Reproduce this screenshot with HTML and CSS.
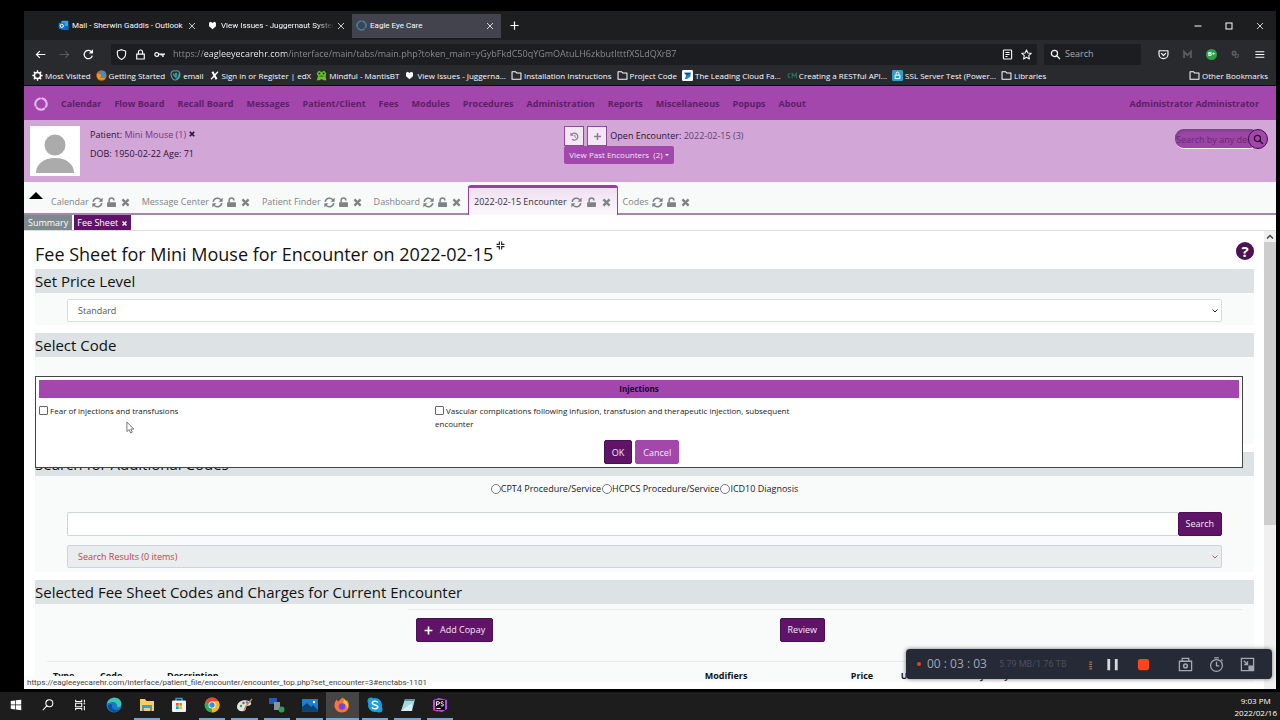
FILE: index.html
```html
<!DOCTYPE html>
<html lang="en">
<head>
    <meta charset="utf-8">
    <title>Eagle Eye Care</title>
    <link rel="stylesheet" href="styles.css">
</head>
<body>
<svg class="sprite" aria-hidden="true">
    <symbol id="times" viewBox="0 0 16 16"><path d="M3.5 3.5l9 9M12.500 3.500l-9 9" fill="none" stroke="currentColor" stroke-width="3.400"/></symbol>
    <symbol id="thin-x" viewBox="0 0 16 16"><path d="M2 2l12 12M14 2L2 14" fill="none" stroke="currentColor" stroke-width="1.600"/></symbol>
    <symbol id="sync" viewBox="0 0 16 16"><path d="M1.800 7A6.300 6.300 0 0 1 13 4.200M14.200 9A6.300 6.300 0 0 1 3 11.800" fill="none" stroke="currentColor" stroke-width="2.200"/><path d="M15.500 0.800v6h-6zM0.500 15.200v-6h6z" fill="currentColor"/></symbol>
    <symbol id="unlock" viewBox="0 0 16 16"><path d="M4.500 8V5a3.500 3.500 0 0 1 7 0" fill="none" stroke="currentColor" stroke-width="2.200"/><rect x="1.500" y="7.500" width="13" height="7" rx="1" fill="currentColor"/></symbol>
    <symbol id="folder" viewBox="0 0 16 16"><path d="M1.500 13.500v-11h5l2 2h6v9z" fill="none" stroke="currentColor" stroke-width="1.500" stroke-linejoin="round"/></symbol>
    <symbol id="mantis" viewBox="0 0 16 16"><path d="M8 13.500L3 9V4l2.500-1.500L8 4.500l2.500-2L13 4v5z" fill="#fff"/></symbol>
    <symbol id="lens" viewBox="0 0 16 16"><circle cx="6.500" cy="6.500" r="4.500" fill="none" stroke="currentColor" stroke-width="1.800"/><path d="M10 10l4.500 4.500" stroke="currentColor" stroke-width="2"/></symbol>
    <symbol id="ring" viewBox="0 0 16 16"><circle cx="8" cy="8" r="6.300" fill="none" stroke="currentColor" stroke-width="1.200"/><path d="M9 1.500A6.500 6.500 0 0 1 13.400 11.500M12.200 13A6.500 6.500 0 0 1 2.500 11.500M1.900 10.300A6.500 6.500 0 0 1 7.400 1.500" fill="none" stroke="currentColor" stroke-width="2.400"/></symbol>
    <symbol id="chevron" viewBox="0 0 16 16"><path d="M3 5l5 5 5-5" fill="none" stroke="currentColor" stroke-width="2"/></symbol>
</svg>

<div class="browser">
    <div class="tabbar">
        <div class="browser-tab">
            <svg class="favicon" viewBox="0 0 16 16"><rect x="5" y="1" width="10" height="13" rx="1" fill="#28a8ea"/><path d="M5 8l10 1v5H5z" fill="#1066b5"/><rect x="1" y="4" width="9" height="9" rx="1" fill="#0f78d4"/><circle cx="5.500" cy="8.500" r="2.300" fill="none" stroke="#fff" stroke-width="1.400"/></svg>
            <span class="tab-title">Mail - Sherwin Gaddis - Outlook</span>
            <button class="icon-btn" aria-label="Close tab"><svg class="mini"><use href="#thin-x"/></svg></button>
        </div>
        <div class="browser-tab">
            <svg class="favicon"><use href="#mantis"/></svg>
            <span class="tab-title fade">View Issues - Juggernaut System</span>
            <button class="icon-btn" aria-label="Close tab"><svg class="mini"><use href="#thin-x"/></svg></button>
        </div>
        <div class="browser-tab current">
            <svg class="favicon blue"><use href="#ring"/></svg>
            <span class="tab-title">Eagle Eye Care</span>
            <button class="icon-btn" aria-label="Close tab"><svg class="mini"><use href="#thin-x"/></svg></button>
        </div>
        <button class="icon-btn new-tab" aria-label="New tab"><svg class="ico" viewBox="0 0 16 16"><path d="M8 2v12M2 8h12" stroke="#fff" stroke-width="1.800"/></svg></button>
        <div class="window-buttons">
            <button class="icon-btn" aria-label="Minimize"><svg class="mini" viewBox="0 0 16 16"><path d="M1 8h14" stroke="#fff" stroke-width="2"/></svg></button>
            <button class="icon-btn" aria-label="Maximize"><svg class="mini" viewBox="0 0 16 16"><rect x="2" y="2" width="12" height="12" fill="none" stroke="#fff" stroke-width="2"/></svg></button>
            <button class="icon-btn" aria-label="Close"><svg class="mini"><use href="#thin-x"/></svg></button>
        </div>
    </div>

    <div class="navbar">
        <div class="nav-buttons">
            <button class="icon-btn" aria-label="Back"><svg class="ico" viewBox="0 0 16 16"><path d="M15 8H2M7 3L2 8l5 5" fill="none" stroke="#fff" stroke-width="1.600"/></svg></button>
            <button class="icon-btn dim" aria-label="Forward"><svg class="ico" viewBox="0 0 16 16"><path d="M1 8h13M9 3l5 5-5 5" fill="none" stroke="currentColor" stroke-width="1.600"/></svg></button>
            <button class="icon-btn" aria-label="Reload"><svg class="ico" viewBox="0 0 16 16"><path d="M13.500 9.500A6 6 0 1 1 12 4" fill="none" stroke="#fff" stroke-width="1.800"/><path d="M14.500 0.500v6h-6z" fill="#fff"/></svg></button>
        </div>
        <div class="urlbar">
            <svg class="ico" viewBox="0 0 16 16"><path d="M8 1l6 2v4c0 4-3 7-6 8.300C5 14 2 11 2 7V3z" fill="none" stroke="currentColor" stroke-width="1.600"/></svg>
            <svg class="ico" viewBox="0 0 16 16"><path d="M5 7V4.500a3 3 0 0 1 6 0V7M2.500 7.500h11v7h-11z" fill="none" stroke="currentColor" stroke-width="1.700"/></svg>
            <svg class="ico" viewBox="0 0 16 16"><circle cx="4" cy="8" r="2.800" fill="none" stroke="currentColor" stroke-width="1.700"/><path d="M7 7.500h9M13 7.500v4M10.500 7.500v2" fill="none" stroke="currentColor" stroke-width="2"/></svg>
            <input class="url" aria-label="Address" value="https://eagleeyecarehr.com/interface/main/tabs/main.php?token_main=yGybFkdC50qYGmOAtuLH6zkbutItttfXSLdQXrB7">
            <svg class="ico" viewBox="0 0 16 16"><rect x="2" y="1.500" width="12" height="13" rx="1" fill="none" stroke="currentColor" stroke-width="1.600"/><path d="M5 5h6M5 8h6M5 11h3" stroke="currentColor" stroke-width="1.500"/></svg>
            <svg class="ico" viewBox="0 0 16 16"><path d="M8 1.300l2 4.500 4.900.5-3.700 3.300 1.100 4.900L8 12l-4.300 2.500 1.100-4.900L1.100 6.300l4.900-.5z" fill="none" stroke="currentColor" stroke-width="1.500" stroke-linejoin="round"/></svg>
        </div>
        <div class="searchbar">
            <svg class="ico"><use href="#lens"/></svg>
            <input class="search-web" aria-label="Search the web" placeholder="Search">
        </div>
        <div class="extensions">
            <button class="icon-btn" aria-label="Pocket"><svg class="ico" viewBox="0 0 16 16"><path d="M1.500 2.500h13V8a6.500 6 0 0 1-13 0zM4.500 6L8 9.500 11.500 6" fill="none" stroke="currentColor" stroke-width="1.700" stroke-linejoin="round"/></svg></button>
            <button class="icon-btn dim" aria-label="Extension"><svg class="ico" viewBox="0 0 16 16"><path d="M3 13V4l5 5 5-5v9" fill="none" stroke="currentColor" stroke-width="2.600"/></svg></button>
            <button class="icon-btn" aria-label="Extension B+"><span class="badge-b">B+</span></button>
            <button class="icon-btn dim" aria-label="Extension"><svg class="ico" viewBox="0 0 16 16"><circle cx="6" cy="6" r="2.500" fill="none" stroke="currentColor" stroke-width="2.400"/><path d="M7 8h5v3a3 3 0 0 1-4 1z" fill="none" stroke="currentColor" stroke-width="1.600"/></svg></button>
            <button class="icon-btn" aria-label="Menu"><svg class="ico" viewBox="0 0 16 16"><path d="M2 4h13M2 8h13M2 12h13" stroke="currentColor" stroke-width="1.800"/></svg></button>
        </div>
    </div>

    <div class="bookmarks">
        <a href="#"><svg class="ico" viewBox="0 0 16 16"><circle cx="8" cy="8" r="4.500" fill="none" stroke="#fff" stroke-width="2.200"/><path d="M8 0.500v3M8 12.500v3M0.500 8h3M12.500 8h3M2.700 2.700l2 2M11.300 11.300l2 2M13.300 2.700l-2 2M4.700 11.300l-2 2" stroke="#fff" stroke-width="2"/></svg>Most Visited</a>
        <a href="#"><svg class="ico" viewBox="0 0 16 16"><circle cx="8" cy="8" r="7.500" fill="#e66000"/><circle cx="9" cy="6.500" r="5" fill="#3b8fd0"/><path d="M1 5c2 1 3 0 5 1s2 3 0 4 5 3 8 0c-2 5-9 6-12 1z" fill="#ff9500"/></svg>Getting Started</a>
        <a href="#"><svg class="ico" viewBox="0 0 16 16"><path d="M8 1.500C4 0 1 3 1.500 7S5 15 8 14.500 14.500 11 14.500 7 12 0 8 1.500zM5 5c0 5 5 6 5 2s-4-2-2 3 6-1 5-5" fill="none" stroke="#3fa7ab" stroke-width="1.600"/></svg>email</a>
        <a href="#"><svg class="ico" viewBox="0 0 16 16"><path d="M5 2.500l6 11" stroke="#fff" stroke-width="3"/><path d="M13 2.500L3 13.500" stroke="#fff" stroke-width="1.800"/></svg>Sign in or Register | edX</a>
        <a href="#"><svg class="ico" viewBox="0 0 16 16"><path d="M1 5l3-4 4 2 4-2 3 4-1 4 1 6h-4l-3-2-3 2H1l2-6z" fill="#6cc02b"/><circle cx="5" cy="5" r="1.400" fill="#143008"/><circle cx="11" cy="5" r="1.400" fill="#143008"/><path d="M5 9h6" stroke="#143008"/></svg>Mindful - MantisBT</a>
        <a href="#"><svg class="ico"><use href="#mantis"/></svg>View Issues - Juggerna...</a>
        <a href="#"><svg class="ico"><use href="#folder"/></svg>Installation Instructions</a>
        <a href="#"><svg class="ico"><use href="#folder"/></svg>Project Code</a>
        <a href="#"><svg class="ico" viewBox="0 0 16 16"><rect width="16" height="16" rx="2" fill="#fff"/><path d="M3 4h10l-1 6-5 3H4l2-5z" fill="#2485d8"/><path d="M3 4h10l-5 4z" fill="#174a86"/></svg>The Leading Cloud Fa...</a>
        <a href="#"><svg class="ico" viewBox="0 0 16 16"><path d="M6 5a3 3 0 1 0 0 6M9 12V5l3 4 3-4v7" fill="none" stroke="#2f7058" stroke-width="1.600"/></svg>Creating a RESTful API...</a>
        <a href="#"><svg class="ico" viewBox="0 0 16 16"><rect width="16" height="16" rx="2" fill="#2d9fc9"/><path d="M6 7V5a2 2 0 0 1 4 0v2M4.500 7.500h7v5h-7z" fill="none" stroke="#fff" stroke-width="1.400"/></svg>SSL Server Test (Power...</a>
        <a href="#"><svg class="ico"><use href="#folder"/></svg>Libraries</a>
        <a href="#" class="last"><svg class="ico"><use href="#folder"/></svg>Other Bookmarks</a>
    </div>

    <div class="app">
        <nav class="menu">
            <svg class="logo"><use href="#ring"/></svg>
            <a href="#">Calendar</a>
            <a href="#">Flow Board</a>
            <a href="#">Recall Board</a>
            <a href="#">Messages</a>
            <a href="#">Patient/Client</a>
            <a href="#">Fees</a>
            <a href="#">Modules</a>
            <a href="#">Procedures</a>
            <a href="#">Administration</a>
            <a href="#">Reports</a>
            <a href="#">Miscellaneous</a>
            <a href="#">Popups</a>
            <a href="#">About</a>
            <a href="#" class="user">Administrator Administrator</a>
        </nav>

        <div class="patient">
            <div class="patient-info">
                <svg class="avatar" viewBox="0 0 50 50"><rect width="50" height="50" fill="#fff"/><circle cx="25" cy="19" r="10.500" fill="#ababab"/><path d="M6 47c0-9 8-15 19-15s19 6 19 15z" fill="#ababab"/></svg>
                <div class="patient-text">
                    <div>Patient: <a href="#">Mini Mouse (1)</a> <button class="icon-btn dark" aria-label="Clear patient"><svg class="mini"><use href="#times"/></svg></button></div>
                    <div>DOB: 1950-02-22 Age: 71</div>
                </div>
            </div>
            <div class="encounter">
                <div class="encounter-row">
                    <button class="square" aria-label="History"><svg class="ico" viewBox="0 0 16 16"><path d="M4 5A5 5 0 1 1 4.500 12" fill="none" stroke="currentColor" stroke-width="1.800"/><path d="M2 2v5h5z" fill="currentColor"/><path d="M8.500 5.500v3l2 1.500" fill="none" stroke="currentColor" stroke-width="1.400"/></svg></button>
                    <button class="square" aria-label="New encounter"><svg class="ico" viewBox="0 0 16 16"><path d="M8 3v10M3 8h10" stroke="currentColor" stroke-width="2.200"/></svg></button>
                    <span>Open Encounter: <a href="#">2022-02-15 (3)</a></span>
                </div>
                <button class="past">View Past Encounters&nbsp; (2)<i class="caret"></i></button>
            </div>
            <div class="finder">
                <input class="finder-input" aria-label="Search patients" placeholder="Search by any demographics">
                <button class="finder-btn" aria-label="Search"><svg class="ico"><use href="#lens"/></svg></button>
            </div>
        </div>

        <div class="frames">
            <button class="collapse" aria-label="Collapse"></button>
            <div class="frame-tab"><span>Calendar</span><svg class="ico"><use href="#sync"/></svg><svg class="ico"><use href="#unlock"/></svg><svg class="ico"><use href="#times"/></svg></div>
            <div class="frame-tab"><span>Message Center</span><svg class="ico"><use href="#sync"/></svg><svg class="ico"><use href="#unlock"/></svg><svg class="ico"><use href="#times"/></svg></div>
            <div class="frame-tab"><span>Patient Finder</span><svg class="ico"><use href="#sync"/></svg><svg class="ico"><use href="#unlock"/></svg><svg class="ico"><use href="#times"/></svg></div>
            <div class="frame-tab"><span>Dashboard</span><svg class="ico"><use href="#sync"/></svg><svg class="ico"><use href="#unlock"/></svg><svg class="ico"><use href="#times"/></svg></div>
            <div class="frame-tab active"><span>2022-02-15 Encounter</span><svg class="ico"><use href="#sync"/></svg><svg class="ico"><use href="#unlock"/></svg><svg class="ico"><use href="#times"/></svg></div>
            <div class="frame-tab"><span>Codes</span><svg class="ico"><use href="#sync"/></svg><svg class="ico"><use href="#unlock"/></svg><svg class="ico"><use href="#times"/></svg></div>
        </div>

        <div class="subtabs">
            <a href="#" class="subtab">Summary</a>
            <a href="#" class="subtab active">Fee Sheet <svg class="tiny"><use href="#times"/></svg></a>
        </div>

        <div class="content">
            <main class="sheet">
                <div class="sheet-head">
                    <h1>Fee Sheet for Mini Mouse for Encounter on 2022-02-15</h1>
                    <svg class="compress" viewBox="0 0 16 16"><path d="M6 1v5H1M10 1v5h5M6 15v-5H1M10 15v-5h5" fill="none" stroke="#222" stroke-width="2"/></svg>
                    <a href="#" class="help" aria-label="Help">?</a>
                </div>

                <section class="block">
                    <h2>Set Price Level</h2>
                    <div class="block-body">
                        <div class="select-wrap">
                            <select aria-label="Price level"><option>Standard</option></select>
                            <svg class="mini"><use href="#chevron"/></svg>
                        </div>
                    </div>
                </section>

                <section class="block select-code">
                    <h2>Select Code</h2>
                    <form class="popup">
                        <div class="popup-title">Injections</div>
                        <div class="popup-options">
                            <label><input type="checkbox"> Fear of injections and transfusions</label>
                            <label><input type="checkbox"> Vascular complications following infusion, transfusion and therapeutic injection, subsequent encounter</label>
                        </div>
                        <div class="popup-buttons">
                            <button type="button" class="btn">OK</button>
                            <button type="button" class="btn light">Cancel</button>
                        </div>
                    </form>
                </section>

                <section class="block">
                    <h2>Search for Additional Codes</h2>
                    <div class="block-body search-body">
                        <div class="radios">
                            <label><input type="radio" name="code">CPT4 Procedure/Service</label>
                            <label><input type="radio" name="code">HCPCS Procedure/Service</label>
                            <label><input type="radio" name="code">ICD10 Diagnosis</label>
                        </div>
                        <div class="search-group">
                            <input class="search-text" type="text" aria-label="Search term">
                            <button class="btn">Search</button>
                        </div>
                        <div class="select-wrap results">
                            <select aria-label="Search results"><option>Search Results (0 items)</option></select>
                            <svg class="mini"><use href="#chevron"/></svg>
                        </div>
                    </div>
                </section>

                <section class="block charges">
                    <h2>Selected Fee Sheet Codes and Charges for Current Encounter</h2>
                    <div class="actions">
                        <div><button class="btn"><svg class="ico" viewBox="0 0 16 16"><path d="M8 1v14M1 8h14" stroke="#fff" stroke-width="3"/></svg>Add Copay</button></div>
                        <div><button class="btn">Review</button></div>
                    </div>
                    <table>
                        <thead>
                        <tr>
                            <th class="c-type">Type</th>
                            <th class="c-code">Code</th>
                            <th class="c-desc">Description</th>
                            <th class="c-mod">Modifiers</th>
                            <th class="c-price">Price</th>
                            <th class="c-units">Units</th>
                            <th>Justify</th>
                        </tr>
                        </thead>
                    </table>
                </section>
            </main>
            <div class="scrollbar">
                <svg class="mini" viewBox="0 0 16 16"><path d="M2 11l6-6 6 6" fill="none" stroke="#444" stroke-width="3"/></svg>
                <div class="thumb"></div>
            </div>
            <div class="status">https://eagleeyecarehr.com/interface/patient_file/encounter/encounter_top.php?set_encounter=3#enctabs-1101</div>
        </div>
    </div>
</div>

<div class="taskbar">
    <div class="system">
        <button class="task" aria-label="Start"><svg viewBox="0 0 16 16"><path d="M2 3.500l5-.7v4.700H2zM7.800 2.700L14 2v5.500H7.800zM2 8.300h5V13l-5-.7zM7.800 8.300H14V14l-6.200-.8z" fill="#fff"/></svg></button>
        <button class="task" aria-label="Search"><svg viewBox="0 0 16 16"><circle cx="9.500" cy="6" r="4" fill="none" stroke="#fff" stroke-width="1.200"/><path d="M6.600 9L2 14" stroke="#fff" stroke-width="1.200"/></svg></button>
        <button class="task" aria-label="Task view"><svg viewBox="0 0 16 16"><path d="M3 2v2h7V2M3 14v-2h7v2M3 6h7v4H3zM13 2v3M13 9v5M12 6.500h2" fill="none" stroke="#fff" stroke-width="1.200"/></svg></button>
    </div>
    <div class="apps">
        <button class="task" aria-label="Edge"><svg viewBox="0 0 16 16"><circle cx="8" cy="8" r="7.500" fill="#1679c9"/><path d="M.700 7C2 1 10-1.500 14 3c3 4 1 8-3 7 1-2-1-5-4-5-3 0-5 1-6.300 2z" fill="#3fc8b0"/><path d="M6 8c-1 3 2 6 7.500 4.500C10 17 2 15 2 9c1-2 3-3 4-1z" fill="#0c4f9a"/></svg></button>
        <button class="task open" aria-label="File Explorer"><svg viewBox="0 0 16 16"><path d="M1 2h5l1.500 2H15v10H1z" fill="#f8cf5a"/><path d="M3 8h10v6h-2v-3H5v3H3z" fill="#3d9bd8"/></svg></button>
        <button class="task" aria-label="Store"><svg viewBox="0 0 16 16"><path d="M5 4V1.500h6V4" fill="none" stroke="#2b9be0" stroke-width="1.400"/><rect x="1" y="3.500" width="14" height="11.500" rx="1" fill="#f2f2f2"/><path d="M5 6h2.700v2.700H5z" fill="#f25022"/><path d="M8.300 6H11v2.700H8.300z" fill="#7fba00"/><path d="M5 9.300h2.700V12H5z" fill="#00a4ef"/><path d="M8.300 9.300H11V12H8.300z" fill="#ffb900"/></svg></button>
        <button class="task open" aria-label="Chrome"><svg viewBox="0 0 16 16"><circle cx="8" cy="8" r="7.500" fill="#34a853"/><path d="M1.500 4.200A7.500 7.500 0 0 1 14.500 4.300L8 8z" fill="#ea4335"/><path d="M14.500 4.200A7.500 7.500 0 0 1 8 15.500L8 8l-1-3.800z" fill="#fbbc05"/><circle cx="8" cy="8" r="3.500" fill="#fff"/><circle cx="8" cy="8" r="2.700" fill="#4285f4"/></svg></button>
        <button class="task open" aria-label="Paint"><svg viewBox="0 0 16 16"><path d="M0 10c0-5 6-8 12-6 4 2 2 5-2 5-2 0 0 4-3 5-4 1-7-1-7-4z" fill="#dfe4e6"/><circle cx="4" cy="9" r="1.200" fill="#3fa54b"/><circle cx="6.500" cy="6" r="1.200" fill="#d83b2b"/><circle cx="10" cy="5.500" r="1.200" fill="#2b7fd8"/><path d="M15 2L9 9l-2 5" stroke="#c48a4a" stroke-width="1.400" fill="none"/></svg></button>
        <button class="task open" aria-label="Remote session"><svg viewBox="0 0 16 16"><rect x="0" y="1" width="8" height="6" fill="#2459c4"/><rect x="5" y="5" width="6" height="8" fill="#8b949c"/><circle cx="12.500" cy="12.500" r="3" fill="#2ea04a"/></svg></button>
        <button class="task open" aria-label="Photos"><svg viewBox="0 0 16 16"><rect x="0" y="2" width="16" height="12.500" fill="#1d7fd1"/><path d="M0 14.500V10l5-4 4 4 2-2 5 5v1.500z" fill="#0b4372"/><circle cx="12" cy="5" r="1.200" fill="#fff"/></svg></button>
        <button class="task open focused" aria-label="Firefox"><svg viewBox="0 0 16 16"><path d="M8 15.500C3.500 15.500.500 12 .500 8.500c0-3 1-5 2.500-6 0 1 .5 1.500 1.500 2C5.500 3 7 2.500 8 .5c3 1 3 3 4 3.500l1-1c3 3 3 12.500-5 12.500z" fill="#ff7139"/><path d="M10 2c4 3 5 7 3 10 0-4-2-6-4-6z" fill="#ffcb32"/><circle cx="8" cy="9.500" r="3.200" fill="#7542e5"/></svg></button>
        <button class="task open" aria-label="Skype"><svg viewBox="0 0 16 16"><circle cx="8" cy="8" r="7" fill="#1b9de2"/><circle cx="4" cy="4" r="3.500" fill="#1b9de2"/><circle cx="12" cy="12" r="3.500" fill="#1b9de2"/><path d="M10.800 5.500C10 3.800 5.300 3.800 5.300 6c0 2.500 5.500 1.500 5.500 4 0 2.300-5 2.300-5.800.3" fill="none" stroke="#fff" stroke-width="1.600"/></svg></button>
        <button class="task open" aria-label="Notepad"><svg viewBox="0 0 16 16"><path d="M5 2h10l-3 12H1z" fill="#a9d7df"/><path d="M5 2h10l-.5 2h-10z" fill="#5f8f99"/><path d="M1 14l11-8 0 8z" fill="#d6eff2"/></svg></button>
        <button class="task open" aria-label="PhpStorm"><svg viewBox="0 0 16 16"><path d="M1 3l6-2 8 2v9l-5 3-9-2z" fill="#b74af7"/><path d="M1 8l5 7-5-2z" fill="#ff318c"/><rect x="3" y="3" width="10" height="10" fill="#111"/><path d="M4.500 9V4.700h1.700a1.200 1.200 0 0 1 0 2.500H4.500M11.500 5.300C10.500 4.200 9 4.600 9 5.700c0 1.300 2.500.9 2.500 2.200s-2 1.300-2.700.3M4.500 11.500h4" fill="none" stroke="#fff" stroke-width="1"/></svg></button>
    </div>
    <div class="clock"><span>9:03 PM</span><span>2022/02/16</span></div>
</div>

<div class="recorder">
    <i class="dot"></i>
    <span class="time">00 : 03 : 03</span>
    <span class="size">5.79 MB/1.76 TB</span>
    <svg class="levels" viewBox="0 0 16 16"><path d="M4 2h5M4 6h5M4 10h5M4 14h5" stroke="#c8682c" stroke-width="1.800"/></svg>
    <button class="icon-btn" aria-label="Pause"><svg class="rec" viewBox="0 0 16 16"><path d="M4 2v12M12 2v12" stroke="#d6d9e0" stroke-width="3"/></svg></button>
    <button class="icon-btn" aria-label="Stop"><svg class="rec" viewBox="0 0 16 16"><rect x="2" y="2" width="12" height="12" rx="2.500" fill="#f9461c"/></svg></button>
    <div class="rec-tools">
        <button class="icon-btn" aria-label="Screenshot"><svg class="rec" viewBox="0 0 16 16"><path d="M1.500 4.500h13v10h-13zM4.500 4V1.500h7V4" fill="none" stroke="currentColor" stroke-width="1.400"/><circle cx="8" cy="9.500" r="2" fill="none" stroke="currentColor" stroke-width="1.600"/></svg></button>
        <button class="icon-btn" aria-label="Timer"><svg class="rec" viewBox="0 0 16 16"><circle cx="8" cy="9" r="6.300" fill="none" stroke="currentColor" stroke-width="1.300"/><path d="M5.500 1h5M8 5v4.500h3M13 2.500l1.500 1.500" fill="none" stroke="currentColor" stroke-width="1.400"/></svg></button>
        <button class="icon-btn" aria-label="Minimize recorder"><svg class="rec" viewBox="0 0 16 16"><path d="M1.500 1.500h13v13h-13zM4 4l4 4M8 4.500V8H4.500" fill="none" stroke="currentColor" stroke-width="1.400"/><rect x="9" y="9" width="5.500" height="5.500" fill="currentColor"/></svg></button>
    </div>
</div>

<svg class="pointer" viewBox="0 0 10 14"><path d="M1 1v10.500l2.500-2.200L5.200 13l1.800-.8L5.300 8.700h3.400z" fill="#fff" stroke="#444" stroke-width=".8"/></svg>
</body>
</html>
```
FILE: styles.css
```css
* {
    box-sizing: border-box;
}

body {
    margin: 0;
    height: 100vh;
    display: flex;
    flex-direction: column;
    padding-top: 11px;
    background: #000;
    font-family: "Open Sans", "Noto Sans", sans-serif;
    font-size: 9px;
    line-height: 12px;
    color: #222;
    overflow: hidden;
}

a {
    color: inherit;
    text-decoration: none;
}

button, input, select {
    font: inherit;
    color: inherit;
    margin: 0;
}

svg {
    display: block;
    flex: none;
}

.sprite {
    position: absolute;
    width: 0;
    height: 0;
}

.ico {
    width: 11px;
    height: 11px;
}

.mini {
    width: 8px;
    height: 8px;
}

.tiny {
    width: 7px;
    height: 7px;
    display: inline-block;
    vertical-align: -1px;
}

.icon-btn {
    display: inline-flex;
    align-items: center;
    justify-content: center;
    padding: 0;
    border: 0;
    background: none;
}

.dim {
    color: #5a5b61;
}

/* browser chrome */

.browser {
    flex: 1;
    min-height: 0;
    display: flex;
    flex-direction: column;
    margin: 0 4px 3px 24px;
    background: #2b2a33;
    color: #fbfbfe;
}

.tabbar {
    display: flex;
    align-items: center;
    height: 29px;
    padding-left: 30px;
    background: #1c1e20;
    font-family: Roboto, sans-serif;
    font-size: 8px;
}

.browser-tab {
    display: flex;
    align-items: center;
    gap: 3px;
    width: 149px;
    height: 24px;
    padding: 0 7px 0 4px;
}

.browser-tab.current {
    background: #42434c;
}

.favicon {
    width: 11px;
    height: 11px;
}

.blue {
    color: #3e7ea6;
}

.tab-title {
    flex: 1;
    overflow: hidden;
    white-space: nowrap;
}

.fade {
    -webkit-mask-image: linear-gradient(to right, #000 85%, transparent);
    mask-image: linear-gradient(to right, #000 85%, transparent);
}

.new-tab {
    margin-left: 8px;
}

.window-buttons {
    display: flex;
    gap: 23px;
    margin-left: auto;
    padding-right: 12px;
}

.navbar {
    display: flex;
    align-items: center;
    height: 25px;
    padding-top: 3px;
    background: #282a2e;
}

.nav-buttons {
    display: flex;
    gap: 13px;
    padding: 0 17px 0 11px;
}

.urlbar, .searchbar {
    display: flex;
    align-items: center;
    height: 21px;
    background: #1b1d20;
    border-radius: 2px;
}

.urlbar {
    flex: 1;
    gap: 8px;
    padding: 0 5px;
    margin-right: 7px;
}

.url {
    flex: 1;
    border: 0;
    padding: 0;
    outline: none;
    color: transparent;
    background: linear-gradient(to right, #8f9095 31px, #fbfbfe 31px, #fbfbfe 114px, #8f9095 114px);
    -webkit-background-clip: text;
    background-clip: text;
}

.searchbar {
    gap: 4px;
    width: 97px;
    padding-left: 6px;
}

.search-web {
    width: 70px;
    border: 0;
    padding: 0;
    background: none;
}

.search-web::placeholder {
    color: #a9aaae;
    opacity: 1;
}

.extensions {
    display: flex;
    gap: 13px;
    padding: 0 11px 0 17px;
}

.badge-b {
    width: 11px;
    height: 11px;
    border-radius: 50%;
    background: #2ea043;
    font-size: 6px;
    font-weight: bold;
    line-height: 11px;
    color: #fff;
}

.bookmarks {
    display: flex;
    align-items: center;
    gap: 5px;
    height: 21px;
    padding: 1px 8px 0;
    background: #282a2e;
    border-bottom: 1px solid #0c0c0d;
    font-size: 8px;
    white-space: nowrap;
}

.bookmarks a {
    display: flex;
    align-items: center;
    gap: 2px;
}

.bookmarks .last {
    margin-left: auto;
}

/* application */

.app {
    flex: 1;
    min-height: 0;
    display: flex;
    flex-direction: column;
    background: #fff;
    color: #222;
}

.menu {
    display: flex;
    align-items: center;
    gap: 13px;
    height: 34px;
    padding: 1px 17px 0 10px;
    background: #a347ad;
    color: #5c2066;
    font-weight: bold;
}

.logo {
    width: 14px;
    height: 14px;
    color: #e6b5ec;
}

.menu .user {
    margin-left: auto;
}

.patient {
    display: flex;
    height: 62px;
    padding: 6px 8px 0 6px;
    background: #d2a6d7;
    color: #2d1233;
}

.patient-info {
    display: flex;
    flex: 0 0 43%;
    gap: 10px;
}

.avatar {
    width: 50px;
    height: 50px;
}

.patient-text {
    display: flex;
    flex-direction: column;
    gap: 7px;
    padding-top: 3px;
}

.patient-text a {
    color: #7a3186;
}

.dark {
    color: #2d1233;
}

.encounter {
    flex: 1;
    padding-left: 2px;
}

.encounter-row {
    display: flex;
    align-items: center;
    gap: 3px;
}

.encounter-row a {
    color: #65406c;
}

.square {
    display: flex;
    align-items: center;
    justify-content: center;
    width: 20px;
    height: 20px;
    padding: 0;
    border: 1px solid #8f4b99;
    background: #f3e6f5;
    color: #8a7d8d;
}

.past {
    display: flex;
    align-items: center;
    gap: 2px;
    height: 18px;
    padding: 0 5px;
    border: 0;
    border-radius: 2px;
    background: #a347ad;
    color: #f3e2f5;
    font-size: 8px;
}

.caret {
    border: 2px solid transparent;
    border-top-color: #fff;
    border-bottom: 0;
}

.finder {
    display: flex;
    align-items: flex-start;
    padding-top: 3px;
}

.finder-input {
    width: 84px;
    height: 20px;
    padding: 3px 0 1px 1px;
    border: 0;
    border-bottom: 1px solid #fff;
    border-radius: 9px;
    background: #9c45a6;
    box-shadow: inset 1px 2px 2px #7a4482;
}

.finder-input::placeholder {
    color: #642a6d;
    opacity: 1;
}

.finder-btn {
    display: flex;
    align-items: center;
    justify-content: center;
    width: 20px;
    height: 20px;
    margin-left: -11px;
    padding: 0;
    border: 1px solid #3d1145;
    border-radius: 50%;
    background: #a347ad;
    color: #260a2c;
}

.frames {
    display: flex;
    align-items: flex-end;
    height: 33px;
    padding-left: 5px;
    background: #f7faf9;
    border-bottom: 2px solid #a487ab;
}

.collapse {
    align-self: center;
    width: 0;
    height: 0;
    padding: 0;
    margin: 0 3px 4px 0;
    border: 7px solid transparent;
    border-top: 0;
    border-bottom-color: #000;
    background: none;
}

.frame-tab {
    display: flex;
    align-items: center;
    gap: 3px;
    height: 28px;
    padding: 5px 5px 0 4px;
    border: 1px solid transparent;
    border-bottom: 0;
    color: #7e8484;
}

.frame-tab.active {
    gap: 4px;
    margin-bottom: -2px;
    height: 30px;
    padding: 1px 5px 0;
    border-color: #934399;
    border-top: 3px solid #934399;
    border-radius: 3px 3px 0 0;
    background: linear-gradient(#f0dff2, #fcf8fd);
    color: #333;
}

.frame-tab.active .ico {
    color: #7e8484;
}

.subtabs {
    display: flex;
    gap: 2px;
    height: 16px;
    border-bottom: 1px solid #dcdcdc;
}

.subtab {
    padding: 2px 4px 1px;
    background: #7d8a8c;
    color: #fff;
}

.subtab.active {
    padding: 2px 3px 1px;
    background: #5f1468;
}

.content {
    position: relative;
    flex: 1;
    min-height: 0;
    display: flex;
    overflow: hidden;
}

.sheet {
    flex: 1;
    padding: 0 10px 0 11px;
}

.sheet-head {
    display: flex;
    align-items: center;
    gap: 3px;
    height: 38px;
    padding-top: 8px;
}

h1, h2 {
    margin: 0;
    font-weight: normal;
    color: #111;
}

h1 {
    font-size: 18px;
    line-height: 24px;
}

h2 {
    padding: 1px 0;
    background: #dde3e4;
    font-size: 15px;
    line-height: 22px;
}

.compress {
    align-self: flex-start;
    width: 9px;
    height: 9px;
    margin-top: 2px;
}

.help {
    width: 18px;
    height: 18px;
    margin: 0 0 6px auto;
    border-radius: 50%;
    background: #4d1158;
    color: #fff;
    font-size: 15px;
    font-weight: bold;
    line-height: 18px;
    text-align: center;
}

.block {
    margin-bottom: 8px;
    background: #f8fbfa;
}

.block-body {
    padding: 6px 32px 3px;
}

.select-wrap {
    position: relative;
    height: 23px;
}

.select-wrap select {
    width: 100%;
    height: 100%;
    padding: 0 10px;
    border: 1px solid #d9dddd;
    border-radius: 2px;
    appearance: none;
    background: #fff;
    color: #555;
}

.select-wrap .mini {
    position: absolute;
    right: 3px;
    top: 8px;
}

.results select {
    background: #e9edee;
    color: #d03848;
    border-color: #ced4da;
}

.results .mini {
    color: #b85b72;
}

.select-code {
    position: relative;
    height: 111px;
}

.popup {
    position: absolute;
    z-index: 1;
    top: 43px;
    left: 0;
    right: 11px;
    padding: 3px;
    border: 1px solid #444;
    background: #fff;
    font-size: 8px;
    line-height: 13px;
}

.popup-title {
    height: 18px;
    background: #a347ad;
    color: #16031a;
    font-weight: bold;
    line-height: 18px;
    text-align: center;
}

.popup-options {
    display: grid;
    grid-template-columns: 33% 33%;
    padding: 6px 0 10px;
}

.popup-options label {
    padding-right: 20px;
}

.popup-options input {
    appearance: none;
    width: 9px;
    height: 9px;
    border: 1px solid #666;
    border-radius: 1px;
    background: #fff;
    vertical-align: -1px;
}

.popup-buttons {
    display: flex;
    justify-content: center;
    gap: 3px;
    padding-left: 5px;
}

.btn {
    display: inline-flex;
    align-items: center;
    gap: 7px;
    height: 24px;
    padding: 0 7px;
    border: 1px solid #4a0f52;
    border-radius: 2px;
    background: #5f1468;
    color: #f5e8f7;
    font-size: 9px;
}

.btn .ico {
    width: 9px;
    height: 9px;
}

.btn.light {
    border-color: #a347ad;
    background: #a347ad;
}

.search-body {
    display: flex;
    flex-direction: column;
    gap: 9px;
    padding: 7px 32px 4px;
}

.radios {
    display: flex;
    justify-content: center;
    gap: 1px;
    height: 20px;
}

.radios label {
    display: flex;
    align-items: flex-start;
}

.radios input {
    appearance: none;
    width: 10px;
    height: 10px;
    margin-top: 1px;
    border: 1px solid #777;
    border-radius: 50%;
    background: #fff;
}

.search-group {
    display: flex;
}

.search-text {
    flex: 1;
    height: 24px;
    border: 1px solid #ced4da;
    border-right: 0;
    border-radius: 2px 0 0 2px;
}

.charges {
    margin-bottom: 0;
}

.actions {
    display: grid;
    grid-template-columns: 4fr 5fr;
    margin: 5px 12px 0 373px;
    padding: 8px;
    height: 52px;
    border-top: 1px solid #e6eaea;
}

table {
    width: calc(100% - 24px);
    margin: 0 12px;
    border-top: 1px solid #e6eaea;
    border-collapse: collapse;
    table-layout: fixed;
}

th {
    padding: 8px 0 0 6px;
    text-align: left;
    color: #111;
}

.c-type { width: 47px; }
.c-code { width: 67px; }
.c-desc { width: 45%; }
.c-mod { width: 146px; }
.c-price { width: 50px; }
.c-units { width: 80px; }

.scrollbar {
    display: flex;
    flex-direction: column;
    align-items: center;
    width: 12px;
    padding-top: 2px;
    background: #f0f0f0;
}

.thumb {
    width: 100%;
    height: 62%;
    margin-top: 1px;
    background: #cdcdcd;
}

.status {
    position: absolute;
    z-index: 2;
    left: 0;
    bottom: 0;
    padding: 1px 2px 0 3px;
    background: #fbfbfb;
    color: #444;
    font-family: Roboto, sans-serif;
    font-size: 8px;
}

/* taskbar */

.taskbar {
    display: flex;
    height: 28px;
    background: #1d1d1d;
    color: #fff;
}

.system {
    display: flex;
    padding-right: 2px;
}

.system .task {
    width: 32px;
}

.apps {
    display: grid;
    grid-template-columns: repeat(11, 1fr);
    width: 28%;
}

.task {
    display: flex;
    align-items: center;
    justify-content: center;
    padding: 0;
    border: 0;
    border-bottom: 2px solid transparent;
    background: none;
}

.task svg {
    width: 16px;
    height: 16px;
}

.system svg {
    width: 14px;
    height: 14px;
}

.open {
    margin: 0 3px;
    border-bottom-color: #6fa8d6;
}

.focused {
    margin: 0;
    background: #454545;
}

.clock {
    display: flex;
    flex-direction: column;
    align-items: center;
    margin-left: auto;
    padding: 3px 3px 0 0;
    font-size: 8px;
}

/* screen recorder */

.recorder {
    position: absolute;
    z-index: 3;
    right: 8px;
    bottom: 41px;
    display: flex;
    align-items: center;
    width: 366px;
    height: 30px;
    padding: 0 17px 0 11px;
    border-radius: 4px;
    background: #252a36;
    color: #a3a8b3;
    box-shadow: 0 0 4px #777;
}

.dot {
    width: 4px;
    height: 4px;
    border-radius: 50%;
    background: #e8432a;
}

.time {
    margin-left: 6px;
    font-size: 12px;
}

.size {
    margin-left: 12px;
    color: #4b505c;
    font-family: Roboto, sans-serif;
}

.levels {
    width: 9px;
    height: 9px;
    margin: 2px 9px 0 auto;
}

.rec {
    width: 15px;
    height: 15px;
}

.recorder > .icon-btn {
    margin-right: 16px;
}

.rec-tools {
    display: flex;
    gap: 16px;
    padding-left: 11px;
}

.pointer {
    position: absolute;
    z-index: 3;
    left: 126px;
    top: 421px;
    width: 9px;
    height: 13px;
}
```
